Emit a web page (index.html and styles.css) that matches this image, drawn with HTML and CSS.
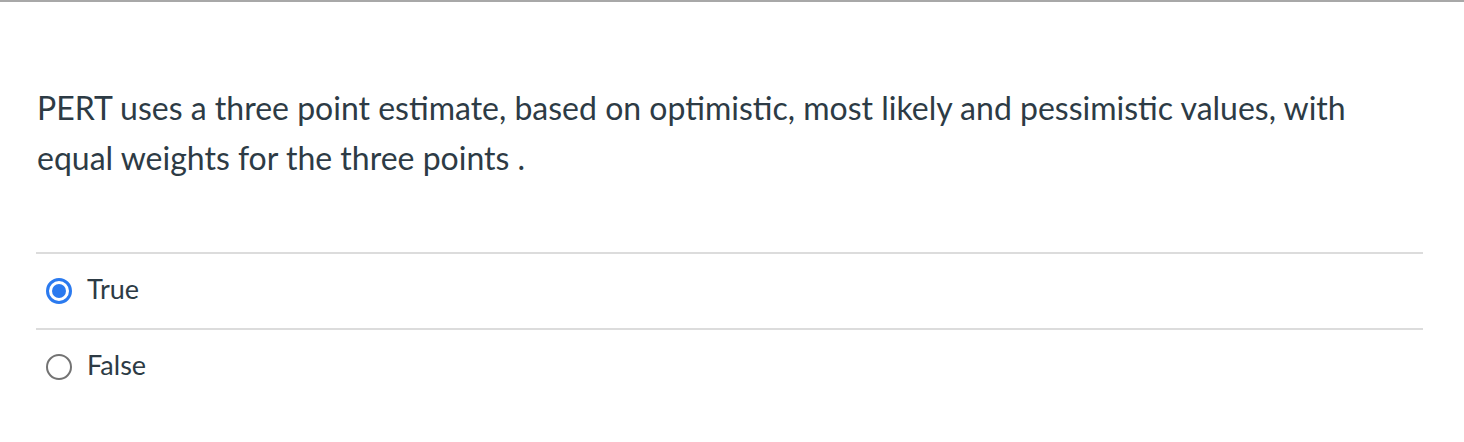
FILE: index.html
```html
<!DOCTYPE html>
<html lang="en">
<head>
    <meta charset="UTF-8">
    <title>Quiz question</title>
    <link rel="stylesheet" href="styles.css">
</head>
<body>
    <div class="question">
        <p class="question-text">PERT uses a three point estimate, based on optimistic, most likely and pessimistic values, with equal weights for the three points .</p>
        <div class="answers">
            <label class="answer">
                <input type="radio" name="answer" value="true" checked>
                <span class="radio"></span>
                <span class="answer-text">True</span>
            </label>
            <label class="answer">
                <input type="radio" name="answer" value="false">
                <span class="radio"></span>
                <span class="answer-text">False</span>
            </label>
        </div>
    </div>
</body>
</html>
```

FILE: styles.css
```css
body {
    margin: 0;
    font-family: Lato, "Open Sans", sans-serif;
    color: #2d3b45;
    background: #fff;
    border-top: 2px solid #a8a8a8;
}
.question {
    padding: 0 41px 0 36px;
}
.question-text {
    margin: 81px 0 69px 1px;
    font-size: 32px;
    line-height: 50px;
    max-width: 1350px;
}
.answers {
    display: flex;
    flex-direction: column;
}
.answer {
    display: flex;
    align-items: center;
    gap: 15px;
    height: 74px;
    padding-left: 10px;
    border-top: 2px solid #dcdcdc;
    cursor: pointer;
}
.answer input {
    position: absolute;
    opacity: 0;
    width: 0;
    height: 0;
}
.radio {
    width: 26px;
    height: 26px;
    border: 2px solid #737373;
    border-radius: 50%;
    box-sizing: border-box;
    display: flex;
    align-items: center;
    justify-content: center;
}
.answer input:checked + .radio {
    border-color: #2b7aef;
    border-width: 3px;
}
.answer input:checked + .radio::after {
    content: "";
    width: 14px;
    height: 14px;
    border-radius: 50%;
    background: #2b7aef;
}
.answer-text {
    font-size: 27px;
    line-height: 30px;
    margin-bottom: 4px;
}
```
